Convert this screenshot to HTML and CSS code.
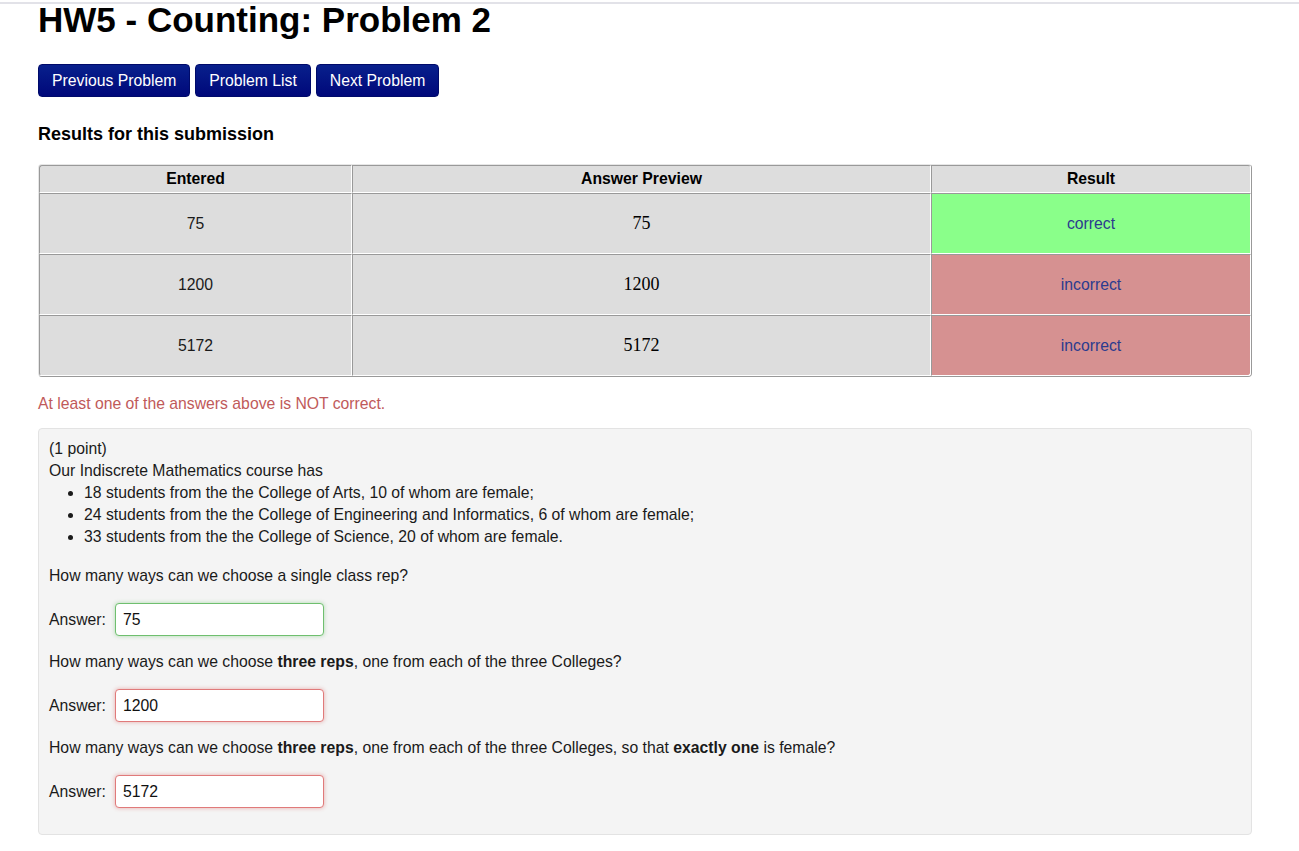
FILE: index.html
```html
<!DOCTYPE html>
<html lang="en">
<head>
  <meta charset="UTF-8">
  <meta name="viewport" content="width=device-width, initial-scale=1.0">
  <title>HW5 - Counting: Problem 2</title>
  <link rel="stylesheet" href="styles.css">
</head>
<body>

  <div class="top-line"></div>

  <div class="page">
    <h1>HW5 - Counting: Problem 2</h1>

    <nav class="problem-nav">
      <a href="#" class="nav-btn">Previous Problem</a>
      <a href="#" class="nav-btn">Problem List</a>
      <a href="#" class="nav-btn">Next Problem</a>
    </nav>

    <h3 class="results-title">Results for this submission</h3>

    <table class="attempt-results">
      <tr>
        <th class="col-entered">Entered</th>
        <th class="col-preview">Answer Preview</th>
        <th class="col-result">Result</th>
      </tr>
      <tr>
        <td>75</td>
        <td class="preview">75</td>
        <td class="result correct">correct</td>
      </tr>
      <tr>
        <td>1200</td>
        <td class="preview">1200</td>
        <td class="result incorrect">incorrect</td>
      </tr>
      <tr>
        <td>5172</td>
        <td class="preview">5172</td>
        <td class="result incorrect">incorrect</td>
      </tr>
    </table>

    <div class="summary-msg">At least one of the answers above is NOT correct.</div>

    <div class="problem">
      <div>(1 point)</div>
      <div>Our Indiscrete Mathematics course has</div>
      <ul>
        <li>18 students from the the College of Arts, 10 of whom are female;</li>
        <li>24 students from the the College of Engineering and Informatics, 6 of whom are female;</li>
        <li>33 students from the the College of Science, 20 of whom are female.</li>
      </ul>

      <p>How many ways can we choose a single class rep?</p>
      <div class="answer-row">
        <label>Answer:</label>
        <input type="text" class="answer ok" value="75">
      </div>

      <p>How many ways can we choose <b>three reps</b>, one from each of the three Colleges?</p>
      <div class="answer-row">
        <label>Answer:</label>
        <input type="text" class="answer bad" value="1200">
      </div>

      <p>How many ways can we choose <b>three reps</b>, one from each of the three Colleges, so that <b>exactly one</b> is female?</p>
      <div class="answer-row">
        <label>Answer:</label>
        <input type="text" class="answer bad" value="5172">
      </div>
    </div>
  </div>

</body>
</html>
```

FILE: styles.css
```css
body {
  margin: 0;
  font-family: "Liberation Sans", Arial, sans-serif;
  font-size: 15.75px;
  color: #1a1a1a;
  background: #fff;
}

.top-line {
  margin-top: 2px;
  height: 2px;
  background: #e2e2e8;
}

.page {
  margin: 0 47px 0 38px;
}

h1 {
  margin: 1px 0 0;
  font-size: 35px;
  line-height: 30px;
  color: #000;
}

.problem-nav {
  display: flex;
  gap: 5px;
  margin-top: 29px;
}

.nav-btn {
  display: block;
  padding: 6px 13px;
  line-height: 19px;
  border: 1px solid #000a6a;
  border-radius: 4px;
  background: linear-gradient(#08208c, #00087a);
  color: #fff;
  text-decoration: none;
}

.results-title {
  margin: 27px 0 0;
  font-size: 18px;
  line-height: 20px;
  color: #000;
}

.attempt-results {
  margin-top: 20px;
  width: 100%;
  border-collapse: separate;
  border-spacing: 0;
  border: 1px solid;
  border-color: #e6e6e6 #999 #999 #e6e6e6;
  border-radius: 4px;
}

.attempt-results th,
.attempt-results td {
  background: #ddd;
  border: 1px solid;
  border-color: #999 #fff #fff #999;
  text-align: center;
  vertical-align: middle;
  padding: 0 5px;
}

.attempt-results th {
  height: 26px;
  color: #000;
}

.attempt-results td {
  height: 59px;
}

.col-entered { width: 301px; }
.col-result { width: 308px; }

.attempt-results td.preview {
  font-family: "Liberation Serif", "Times New Roman", serif;
  font-size: 18px;
  color: #000;
}

.attempt-results td.result { color: #2b3b8e; }
.attempt-results td.correct { background: #8aff8a; }
.attempt-results td.incorrect { background: #d69191; }

.attempt-results tr:first-child th:first-child { border-top-left-radius: 3px; }
.attempt-results tr:first-child th:last-child { border-top-right-radius: 3px; }
.attempt-results tr:last-child td:first-child { border-bottom-left-radius: 3px; }
.attempt-results tr:last-child td:last-child { border-bottom-right-radius: 3px; }

.summary-msg {
  margin-top: 16px;
  color: #bf5a5a;
  line-height: 22px;
}

.problem {
  margin-top: 13px;
  padding: 9px 10px 11px;
  background: #f4f4f4;
  border: 1px solid #e3e3e3;
  border-radius: 4px;
  line-height: 22px;
}

.problem ul {
  margin: 0 0 17px;
  padding-left: 35px;
}

.problem p {
  margin: 15px 0 16px;
}

.answer-row {
  display: flex;
  align-items: center;
  gap: 9px;
  margin-bottom: 15px;
}

.answer {
  box-sizing: border-box;
  height: 33px;
  width: 209px;
  padding: 0 7px;
  font-family: "Liberation Sans", Arial, sans-serif;
  font-size: 15.75px;
  color: #111;
  background: #fff;
  border: 1px solid;
  border-radius: 4px;
  outline: none;
}

.answer.ok {
  border-color: #6fbf6f;
  box-shadow: 0 0 4px rgba(92, 184, 92, 0.45);
}

.answer.bad {
  border-color: #e07a7a;
  box-shadow: 0 0 4px rgba(217, 83, 79, 0.45);
}
```
